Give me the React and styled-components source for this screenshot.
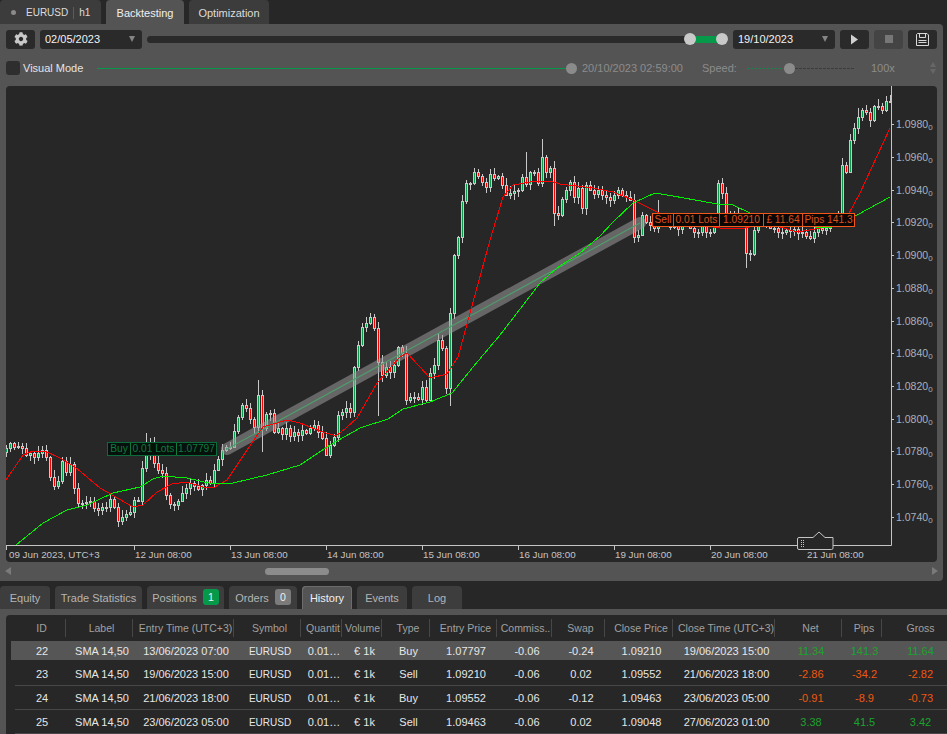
import React from "react";
import styled, { createGlobalStyle } from "styled-components";
import { FaCog } from "react-icons/fa";

const GlobalStyle = createGlobalStyle`
html, body {
    margin: 0;
    padding: 0;
    background: #272727;
    font-family: "Liberation Sans", Arial, sans-serif;
    font-size: 11px;
}
`;

const Page = styled.div`
width: 947px;
height: 734px;
overflow: hidden;
display: flex;
flex-direction: column;
background: #272727;
`;

const TopTabs = styled.div`
height: 24px;
display: flex;
gap: 5px;
`;

const TopTab = styled.div`
width: ${p => p.$width}px;
display: flex;
align-items: center;
justify-content: center;
box-sizing: border-box;
padding-top: 2px;
border-radius: 4px 4px 0 0;
background: ${p => (p.$active ? "#545454" : "#3c3c3c")};
color: ${p => (p.$active ? "#f0f0f0" : "#dcdcdc")};
`;

const SymbolTab = styled(TopTab)`
justify-content: flex-start;
padding-left: 11px;
font-size: 10px;
`;

const StatusDot = styled.span`
width: 5px;
height: 5px;
border-radius: 50%;
background: #8a8a8a;
margin-right: 10px;
`;

const Divider = styled.span`
width: 1px;
height: 12px;
background: #5c5c5c;
margin: 0 5px;
`;

const Panel = styled.div`
width: 943px;
height: 557px;
background: #545454;
border-radius: 0 4px 4px 0;
display: flex;
flex-direction: column;
`;

const ControlRow = styled.div`
display: flex;
align-items: center;
gap: 5px;
height: 19px;
margin-top: 6px;
padding: 0 6px;
`;

const ToolButton = styled.button`
width: 29px;
height: 19px;
padding: 0;
border: 0;
border-radius: 3px;
display: flex;
align-items: center;
justify-content: center;
background: ${p => (p.$disabled ? "#444444" : "#2a2a2a")};
color: ${p => (p.$disabled ? "#777777" : "#c8c8c8")};
`;

const DateSelect = styled.div`
width: 102px;
height: 19px;
box-sizing: border-box;
padding: 0 5px;
border-radius: 3px;
background: #2a2a2a;
color: #f2f2f2;
display: flex;
align-items: center;
justify-content: space-between;
`;

const Caret = styled.span`
width: 0;
height: 0;
border-left: 3px solid transparent;
border-right: 3px solid transparent;
border-top: 6px solid #858585;
margin-right: 2px;
`;

const RangeTrack = styled.div`
position: relative;
flex: 1;
height: 7px;
border-radius: 4px;
background: #2a2a2a;
`;

const RangeFill = styled.div`
position: absolute;
left: 543px;
width: 32px;
top: 0;
bottom: 0;
background: #07994a;
`;

const RangeKnob = styled.div`
position: absolute;
left: ${p => p.$left}px;
top: -3px;
width: 12px;
height: 12px;
border-radius: 50%;
background: #c9c9c9;
`;

const PlaybackRow = styled.div`
display: flex;
align-items: center;
height: 14px;
margin-top: 12px;
padding: 0 6px;
`;

const CheckBox = styled.div`
width: 14px;
height: 14px;
border-radius: 3px;
background: #2e2e2e;
`;

const CheckLabel = styled.span`
width: 74px;
margin-left: 3px;
color: #e4e4e4;
`;

const ProgressLine = styled.div`
position: relative;
align-self: flex-start;
flex: none;
width: 480px;
height: 1px;
margin-top: 7px;
background: #07994a;
`;

const DimKnob = styled.div`
position: absolute;
left: ${p => p.$left}px;
top: -5px;
width: 11px;
height: 11px;
border-radius: 50%;
background: #8b8b8b;
`;

const DimText = styled.span`
width: ${p => p.$width}px;
margin-left: ${p => p.$offset || 0}px;
color: #8c8c8c;
white-space: nowrap;
`;

const SpeedLine = styled.div`
position: relative;
align-self: flex-start;
flex: none;
width: 108px;
height: 1px;
margin-top: 7px;
background: repeating-linear-gradient(90deg, #3c3c3c 0 3px, transparent 3px 4px);
`;

const SpeedFill = styled.div`
width: 42px;
height: 1px;
background: repeating-linear-gradient(90deg, #0a8a45 0 3px, #545454 3px 4px);
`;

const Spinner = styled.div`
margin-left: auto;
margin-right: 1px;
display: flex;
flex-direction: column;
gap: 2px;
`;

const SpinArrow = styled.span`
width: 0;
height: 0;
border-left: 3px solid transparent;
border-right: 3px solid transparent;
border-bottom: ${p => (p.$up ? "5px solid #676767" : "0")};
border-top: ${p => (p.$up ? "0" : "5px solid #676767")};
`;

const ChartBox = styled.div`
position: relative;
width: 931px;
height: 476px;
margin: 11px 0 0 6px;
background: #272727;
border-radius: 4px;
overflow: hidden;
`;

const ChartSvg = styled.svg`
display: block;
width: 931px;
height: 476px;
font-family: "Liberation Sans", Arial, sans-serif;
font-size: 10.5px;
`;

const TradeTag = styled.div`
position: absolute;
left: ${p => p.$left}px;
top: ${p => p.$top}px;
height: 14px;
box-sizing: border-box;
display: flex;
background: ${p => (p.$sell ? "#0c0604" : "#06110b")};
border: 1px solid ${p => (p.$sell ? "#f2581c" : "#0b6b3b")};
color: ${p => (p.$sell ? "#d9531e" : "#0e7a42")};
font-size: 10.2px;
line-height: 12px;
`;

const TagCell = styled.span`
box-sizing: border-box;
width: ${p => p.$width}px;
text-align: center;
white-space: nowrap;
border-left: ${p => (p.$first ? "0" : "1px solid currentColor")};
`;

const ScrollRow = styled.div`
height: 19px;
display: flex;
align-items: center;
padding: 0 5px;
`;

const ScrollArrow = styled.span`
width: 0;
height: 0;
border-top: 4px solid transparent;
border-bottom: 4px solid transparent;
border-right: ${p => (p.$left ? "6px solid #7a7a7a" : "0")};
border-left: ${p => (p.$left ? "0" : "6px solid #7a7a7a")};
`;

const ScrollThumb = styled.div`
width: 64px;
height: 7px;
margin: 0 auto 0 254px;
border-radius: 4px;
background: #8c8c8c;
`;

const BottomTabs = styled.div`
display: flex;
gap: 5px;
height: 24px;
margin-top: 5px;
`;

const BottomTab = styled.div`
width: ${p => p.$width}px;
box-sizing: border-box;
padding-top: 2px;
display: flex;
align-items: center;
justify-content: center;
gap: 6px;
border-radius: 4px 4px 0 0;
background: ${p => (p.$active ? "#545454" : "#3d3d3d")};
color: ${p => (p.$active ? "#f0f0f0" : "#b4b4b4")};
box-shadow: ${p => (p.$active ? "inset 1px 1px 0 #6c6c6c, inset -1px 0 0 #6c6c6c" : "none")};
`;

const Badge = styled.span`
width: 16px;
height: 16px;
margin-top: -2px;
border-radius: 3px;
display: flex;
align-items: center;
justify-content: center;
background: ${p => (p.$green ? "#07994a" : "#7b7b7b")};
color: #f0f0f0;
font-size: 10.5px;
`;

const TableWrap = styled.div`
flex: 1;
background: #545454;
padding: 6px 0 0 6px;
`;

const Table = styled.div`
height: 100%;
background: #272727;
border-radius: 4px 0 0 0;
overflow: hidden;
`;

const columns = "60px 67px 101px 67px 41px 40px 48px 67px 55px 53px 68px 102px 67px 40px 72px";

const HeaderRow = styled.div`
display: grid;
grid-template-columns: ${columns};
height: 26px;
align-items: center;
`;

const HeaderCell = styled.div`
height: 18px;
display: flex;
align-items: center;
border-right: ${p => (p.$last ? "0" : "1px solid #474747")};
`;

const HeaderLabel = styled.div`
flex: 1;
min-width: 0;
margin: 0 0 0 ${p => p.$inset}px;
overflow: hidden;
white-space: nowrap;
text-align: center;
color: #a0a0a0;
font-size: 10.5px;
`;

const Row = styled.div`
display: grid;
grid-template-columns: ${columns};
height: ${p => (p.$selected ? "19px" : "24px")};
margin-bottom: ${p => (p.$selected ? "2px" : "0")};
align-items: center;
background: ${p => (p.$selected
    ? "linear-gradient(#565656, #565656) no-repeat 5px 0"
    : p.$line
        ? "linear-gradient(#474747, #474747) no-repeat 9px 100% / 100% 1px"
        : "none")};
`;

const Cell = styled.div`
padding: 1px 0 0 ${p => (p.$first ? 12 : 5)}px;
text-align: center;
white-space: nowrap;
line-height: 13px;
font-size: ${p => (p.$narrow ? "10px" : "11px")};
color: ${p => p.$tone === "up" ? "#1ba32e" : p.$tone === "down" ? "#f0570f" : "#e6e6e6"};
`;

const random = (seed => () => {
    seed = (seed + 0x6d2b79f5) | 0;
    let t = Math.imul(seed ^ (seed >>> 15), 1 | seed);
    t = (t + Math.imul(t ^ (t >>> 7), 61 | t)) ^ t;
    return ((t ^ (t >>> 14)) >>> 0) / 4294967296;
})(4711);

// candle closes as [x, y], read off the chart
const closes = [
    [6, 448], [10, 443], [14, 447], [18, 446], [22, 448], [26, 455], [30, 453], [34, 457], [38, 453], [42, 450],
    [46, 457], [50, 477], [54, 486], [58, 481], [62, 461], [66, 472], [70, 464], [74, 488], [78, 503], [82, 503],
    [86, 502], [90, 501], [94, 508], [98, 510], [102, 507], [106, 507], [110, 499], [114, 507], [118, 521], [122, 517],
    [126, 514], [130, 512], [134, 500], [138, 501], [142, 468], [146, 455], [150, 442], [154, 463], [158, 470], [162, 473],
    [166, 495], [170, 504], [174, 505], [178, 501], [182, 493], [186, 488], [190, 483], [194, 486], [198, 489], [202, 485],
    [206, 480], [210, 483], [214, 470], [218, 459], [222, 450], [226, 447], [230, 447], [234, 431], [238, 417], [242, 405],
    [246, 408], [250, 419], [254, 427], [258, 395], [262, 428], [266, 414], [270, 413], [274, 432], [278, 428], [282, 434],
    [286, 428], [290, 436], [294, 432], [298, 435], [302, 430], [306, 433], [310, 428], [314, 425], [318, 432], [322, 438],
    [326, 455], [330, 445], [334, 437], [338, 415], [342, 412], [346, 408], [350, 412], [354, 367], [358, 345], [362, 327],
    [366, 323], [370, 317], [374, 328], [378, 362], [382, 375], [386, 367], [390, 372], [394, 365], [398, 347], [402, 353],
    [406, 400], [410, 397], [414, 397], [418, 399], [422, 387], [426, 400], [430, 373], [434, 365], [438, 340], [442, 348],
    [446, 388], [450, 313], [454, 255], [458, 237], [462, 201], [466, 183], [470, 183], [474, 172], [478, 176], [482, 182],
    [486, 187], [490, 174], [494, 178], [498, 176], [502, 185], [506, 195], [510, 193], [514, 191], [518, 190], [522, 177],
    [526, 184], [530, 172], [534, 172], [538, 183], [542, 157], [546, 172], [550, 168], [554, 213], [558, 215], [562, 199],
    [566, 190], [570, 182], [574, 197], [578, 188], [582, 208], [586, 185], [590, 190], [594, 194], [598, 190], [602, 195],
    [606, 197], [610, 200], [614, 195], [618, 190], [622, 195], [626, 197], [630, 200], [634, 237], [638, 235], [642, 215],
    [646, 222], [650, 225], [654, 228], [658, 222], [662, 220], [666, 224], [670, 227], [674, 225], [678, 229], [682, 226],
    [686, 224], [690, 228], [694, 232], [698, 232], [702, 225], [706, 232], [710, 232], [714, 222], [718, 183], [722, 193],
    [726, 213], [730, 215], [734, 214], [738, 219], [742, 222], [746, 253], [750, 254], [754, 230], [758, 225], [762, 222],
    [766, 226], [770, 228], [774, 228], [778, 232], [782, 232], [786, 230], [790, 231], [794, 229], [798, 233], [802, 232],
    [806, 236], [810, 238], [814, 232], [818, 228], [822, 230], [826, 228], [830, 222], [834, 222], [838, 213], [842, 165],
    [846, 172], [850, 140], [854, 128], [858, 117], [862, 110], [866, 112], [870, 120], [874, 106], [878, 106], [882, 110],
    [886, 101], [890, 101],
];

// the few long wicks that stand out
const wickTops = { 146: 433, 150: 438, 258: 380, 262: 390, 370: 313, 526: 152, 542: 139, 546: 155, 718: 180, 658: 200, 858: 108 };
const wickLows = { 262: 452, 378: 416, 450: 406, 554: 226, 746: 268, 634: 243, 150: 460 };

const candles = closes.map(([x, close], i) => {
    const open = i === 0 ? close + 4 : closes[i - 1][1];
    const top = Math.min(open, close);
    const bottom = Math.max(open, close);
    return {
        x,
        up: close <= open,
        top,
        height: Math.max(bottom - top, 1),
        high: wickTops[x] || top - 1 - Math.round(random() * 6),
        low: wickLows[x] || bottom + 1 + Math.round(random() * 6),
    };
});

const redLine = "6,480 23,455 33,451 45,451 60,458 75,467 100,488 133,507 143,505 157,492 172,484 187,482 203,487 213,488 227,480 247,450 263,427 287,420 300,423 320,431 336,436 346,428 357,418 377,383 400,357 407,353 430,378 447,374 458,357 470,313 490,240 503,197 513,185 530,182 550,181 560,184 593,188 613,192 633,200 657,212 680,222 720,228 745,228 767,223 797,232 827,227 847,217 860,193 890,128";
const greenLine = "16,545 43,523 67,510 87,505 113,493 140,487 153,479 163,476 187,478 213,484 233,483 267,475 300,465 330,445 360,428 388,419 403,409 430,402 452,393 473,367 500,335 540,283 557,268 580,253 600,236 613,222 633,203 655,193 673,196 717,204 733,205 750,213 767,213 800,226 830,228 857,215 890,197";

const priceLabels = [
    ["1.0980", 124], ["1.0960", 157], ["1.0940", 190], ["1.0920", 222], ["1.0900", 255], ["1.0880", 288], ["1.0860", 321],
    ["1.0840", 353], ["1.0820", 386], ["1.0800", 419], ["1.0780", 451], ["1.0760", 484], ["1.0740", 517],
];

const timeLabels = [
    ["12 Jun 08:00", 134], ["13 Jun 08:00", 230], ["14 Jun 08:00", 326], ["15 Jun 08:00", 422],
    ["16 Jun 08:00", 518], ["19 Jun 08:00", 614], ["20 Jun 08:00", 710], ["21 Jun 08:00", 806],
];

const Chart = () => (
    <ChartSvg viewBox="6 86 931 476">
        {candles.map(c => (
            <g key={c.x} shapeRendering="crispEdges">
                <line x1={c.x + 0.5} x2={c.x + 0.5} y1={c.high} y2={c.low} stroke="#c8c8c8" />
                <rect
                    x={c.x - 0.5}
                    y={c.top + 0.5}
                    width={2}
                    height={c.height}
                    fill={c.up ? "#0b9b4c" : "#ff0000"}
                    stroke="#c8c8c8"
                />
            </g>
        ))}
        <line x1="227" y1="449" x2="640" y2="223" stroke="#9a9a9a" strokeOpacity="0.55" strokeWidth="12" strokeLinecap="round" />
        <line x1="227" y1="449" x2="640" y2="223" stroke="#4f9c6c" strokeWidth="1.2" />
        <polyline points={redLine} fill="none" stroke="#ff0000" shapeRendering="crispEdges" />
        <polyline points={greenLine} fill="none" stroke="#00f000" shapeRendering="crispEdges" />
        <path d="M6 545.5H891.5V86" fill="none" stroke="#c4c4c4" />
        <line x1="6.5" x2="6.5" y1="545" y2="550" stroke="#c4c4c4" />
        {priceLabels.map(([label, y]) => (
            <g key={label}>
                <line x1="891" x2="894" y1={y + 0.5} y2={y + 0.5} stroke="#c4c4c4" />
                <text x="896" y={y + 4} fill="#aab2ba">{label}<tspan fontSize="8" dy="2">0</tspan></text>
            </g>
        ))}
        <text x="9" y="558" fill="#c4c4c4" fontSize="9.8">09 Jun 2023, UTC+3</text>
        {timeLabels.map(([label, x]) => (
            <g key={label}>
                <line x1={x + 0.5} x2={x + 0.5} y1="545" y2="550" stroke="#c4c4c4" />
                <text x={x + 1} y="558" fill="#c4c4c4" fontSize="9.8">{label}</text>
            </g>
        ))}
        <path d="M799 537.5H813L819 532L825 537.5H833V548Q833 549.5 831.5 549.5H799Q797.5 549.5 797.5 548V539Q797.5 537.5 799 537.5Z" fill="#272727" stroke="#c4c4c4" />
        <path d="M801 540h1v1h-1zM803 540h1v1h-1zM801 542h1v1h-1zM803 542h1v1h-1zM801 544h1v1h-1zM803 544h1v1h-1zM801 546h1v1h-1zM803 546h1v1h-1z" fill="#c4c4c4" />
    </ChartSvg>
);

const PlayIcon = () => (
    <svg width="9" height="11" viewBox="0 0 9 11"><path d="M1 0.5L8 5.5L1 10.5Z" fill="#d0d0d0" /></svg>
);

const StopIcon = () => (
    <svg width="8" height="8" viewBox="0 0 8 8"><rect width="8" height="8" fill="#777777" /></svg>
);

const SaveIcon = () => (
    <svg width="13" height="13" viewBox="0 0 13 13" fill="none" stroke="#d8d8d8">
        <path d="M1.5 0.5H11L12.5 2V12.5H0.5V1.5Z" />
        <path d="M3.5 0.5V4.5H9.5V0.5M2.5 7.5H10.5M2.5 9.5H10.5" />
    </svg>
);

// left inset of each header label, the tight columns get less
const headers = [
    ["ID", 12], ["Label", 5], ["Entry Time (UTC+3)", 5], ["Symbol", 5], ["Quantit", 4], ["Volume", 2], ["Type", 5], ["Entry Price", 5],
    ["Commiss..", 3], ["Swap", 5], ["Close Price", 5], ["Close Time (UTC+3)", 5], ["Net", 5], ["Pips", 5], ["Gross", 5],
];

const trades = [
    ["22", "13/06/2023 07:00", "Buy", "1.07797", "-0.24", "1.09210", "19/06/2023 15:00", "11.34", "141.3", "11.64"],
    ["23", "19/06/2023 15:00", "Sell", "1.09210", "0.02", "1.09552", "21/06/2023 18:00", "-2.86", "-34.2", "-2.82"],
    ["24", "21/06/2023 18:00", "Buy", "1.09552", "-0.12", "1.09463", "23/06/2023 05:00", "-0.91", "-8.9", "-0.73"],
    ["25", "23/06/2023 05:00", "Sell", "1.09463", "0.02", "1.09048", "27/06/2023 01:00", "3.38", "41.5", "3.42"],
];

const App = () => {
    return (
        <Page>
            <GlobalStyle />
            <TopTabs>
                <SymbolTab $width={101}>
                    <StatusDot />EURUSD<Divider />h1
                </SymbolTab>
                <TopTab $width={78} $active>Backtesting</TopTab>
                <TopTab $width={80}>Optimization</TopTab>
            </TopTabs>

            <Panel>
                <ControlRow>
                    <ToolButton><FaCog size={14} /></ToolButton>
                    <DateSelect>02/05/2023<Caret /></DateSelect>
                    <RangeTrack>
                        <RangeFill />
                        <RangeKnob $left={537} />
                        <RangeKnob $left={569} />
                    </RangeTrack>
                    <DateSelect>19/10/2023<Caret /></DateSelect>
                    <ToolButton><PlayIcon /></ToolButton>
                    <ToolButton $disabled><StopIcon /></ToolButton>
                    <ToolButton><SaveIcon /></ToolButton>
                </ControlRow>

                <PlaybackRow>
                    <CheckBox />
                    <CheckLabel>Visual Mode</CheckLabel>
                    <ProgressLine><DimKnob $left={469} /></ProgressLine>
                    <DimText $width={120} $offset={5}>20/10/2023 02:59:00</DimText>
                    <DimText $width={45}>Speed:</DimText>
                    <SpeedLine>
                        <SpeedFill />
                        <DimKnob $left={37} />
                    </SpeedLine>
                    <DimText $width={30} $offset={16}>100x</DimText>
                    <Spinner>
                        <SpinArrow $up />
                        <SpinArrow />
                    </Spinner>
                </PlaybackRow>

                <ChartBox>
                    <Chart />
                    <TradeTag $left={101} $top={356}>
                        <TagCell $first $width={22}>Buy</TagCell>
                        <TagCell $width={46}>0.01 Lots</TagCell>
                        <TagCell $width={40}>1.07797</TagCell>
                    </TradeTag>
                    <TradeTag $sell $left={646} $top={127}>
                        <TagCell $first $width={20}>Sell</TagCell>
                        <TagCell $width={46}>0.01 Lots</TagCell>
                        <TagCell $width={44}>1.09210</TagCell>
                        <TagCell $width={39}>£ 11.64</TagCell>
                        <TagCell $width={52}>Pips 141.3</TagCell>
                    </TradeTag>
                </ChartBox>

                <ScrollRow>
                    <ScrollArrow $left />
                    <ScrollThumb />
                    <ScrollArrow />
                </ScrollRow>
            </Panel>

            <BottomTabs>
                <BottomTab $width={50}>Equity</BottomTab>
                <BottomTab $width={87}>Trade Statistics</BottomTab>
                <BottomTab $width={77}>Positions<Badge $green>1</Badge></BottomTab>
                <BottomTab $width={68}>Orders<Badge>0</Badge></BottomTab>
                <BottomTab $width={50} $active>History</BottomTab>
                <BottomTab $width={50}>Events</BottomTab>
                <BottomTab $width={50}>Log</BottomTab>
            </BottomTabs>

            <TableWrap>
                <Table>
                    <HeaderRow>
                        {headers.map(([h, inset], i) => (
                            <HeaderCell key={h} $last={i === headers.length - 1}>
                                <HeaderLabel $inset={inset}>{h}</HeaderLabel>
                            </HeaderCell>
                        ))}
                    </HeaderRow>
                    {trades.map((t, i) => {
                        const tone = t[7].startsWith("-") ? "down" : "up";
                        return (
                            <Row key={t[0]} $selected={i === 0} $line={i > 0}>
                                <Cell $first>{t[0]}</Cell>
                                <Cell>SMA 14,50</Cell>
                                <Cell>{t[1]}</Cell>
                                <Cell $narrow>EURUSD</Cell>
                                <Cell>0.01…</Cell>
                                <Cell>€ 1k</Cell>
                                <Cell>{t[2]}</Cell>
                                <Cell>{t[3]}</Cell>
                                <Cell>-0.06</Cell>
                                <Cell>{t[4]}</Cell>
                                <Cell>{t[5]}</Cell>
                                <Cell>{t[6]}</Cell>
                                <Cell $tone={tone}>{t[7]}</Cell>
                                <Cell $tone={tone}>{t[8]}</Cell>
                                <Cell $tone={tone}>{t[9]}</Cell>
                            </Row>
                        );
                    })}
                </Table>
            </TableWrap>
        </Page>
    );
};

export default App;
